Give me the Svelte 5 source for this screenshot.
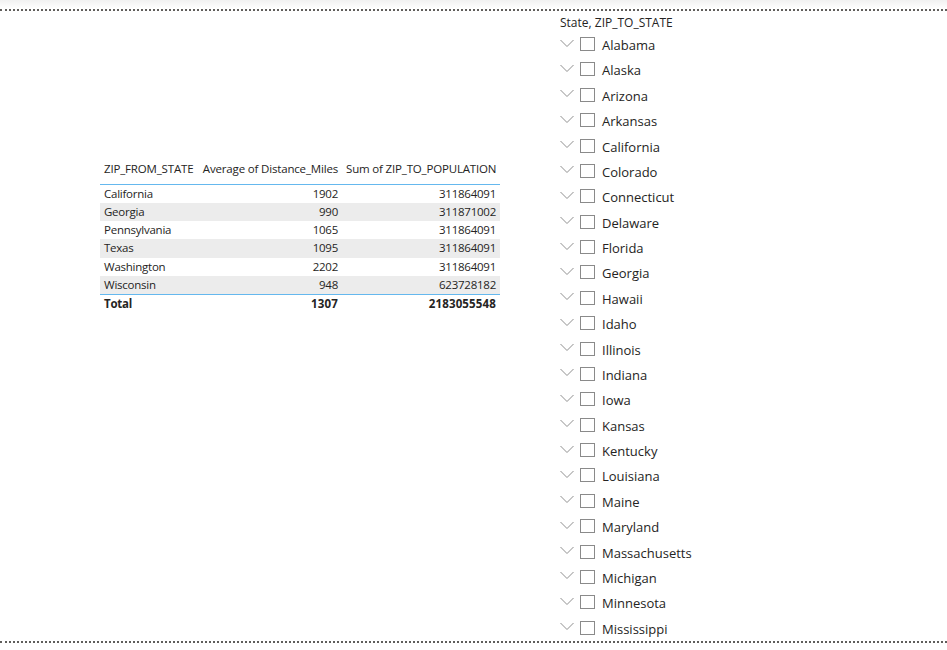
<script>
  const rows = [
    { state: "California", miles: 1902, pop: 311864091 },
    { state: "Georgia", miles: 990, pop: 311871002 },
    { state: "Pennsylvania", miles: 1065, pop: 311864091 },
    { state: "Texas", miles: 1095, pop: 311864091 },
    { state: "Washington", miles: 2202, pop: 311864091 },
    { state: "Wisconsin", miles: 948, pop: 623728182 }
  ];

  const states = [
    "Alabama", "Alaska", "Arizona", "Arkansas", "California", "Colorado",
    "Connecticut", "Delaware", "Florida", "Georgia", "Hawaii", "Idaho",
    "Illinois", "Indiana", "Iowa", "Kansas", "Kentucky", "Louisiana",
    "Maine", "Maryland", "Massachusetts", "Michigan", "Minnesota", "Mississippi"
  ];
</script>

<div class="page">
  <div class="canvas">
    <section class="table-wrap">
      <div class="table">
        <div class="row head">
          <span>ZIP_FROM_STATE</span>
          <span class="num">Average of Distance_Miles</span>
          <span class="num">Sum of ZIP_TO_POPULATION</span>
        </div>
        <div class="body">
          {#each rows as r, i}
            <div class="row" class:odd={i % 2 === 1}>
              <span>{r.state}</span>
              <span class="num">{r.miles}</span>
              <span class="num">{r.pop}</span>
            </div>
          {/each}
        </div>
        <div class="row total">
          <span>Total</span>
          <span class="num">1307</span>
          <span class="num">2183055548</span>
        </div>
      </div>
    </section>

    <section class="slicer">
      <div class="title">State, ZIP_TO_STATE</div>
      <ul>
        {#each states as s}
          <li>
            <svg class="chev" width="15" height="9" viewBox="0 0 15 9">
              <path d="M0.5 1 L7 7.5 L13.5 1" fill="none" stroke="#8f8f8f" stroke-width="1" />
            </svg>
            <span class="box"></span>
            <span class="name">{s}</span>
          </li>
        {/each}
      </ul>
    </section>
  </div>
</div>

<style>
  :global(body) {
    margin: 0;
    background: #fff;
  }
  .page {
    width: 947px;
    height: 650px;
    overflow: hidden;
    box-sizing: border-box;
    padding-top: 9px;
    background: linear-gradient(#f1f1f1, #fff 9px);
    font-family: "Open Sans", "Noto Sans", sans-serif;
    color: #252423;
  }
  .canvas {
    height: 634px;
    box-sizing: border-box;
    border-top: 2px dotted #605e5c;
    border-bottom: 2px dotted #605e5c;
    background: #fff;
    display: flex;
    overflow: hidden;
  }
  .table-wrap {
    flex: none;
    padding: 148px 60px 0 100px;
    width: 400px;
  }
  .table {
    font-size: 11.5px;
    letter-spacing: -0.24px;
  }
  .row {
    display: grid;
    grid-template-columns: 97px 145px 158px;
    height: 18.15px;
    line-height: 18.4px;
  }
  .row span {
    padding: 0 4px;
    white-space: nowrap;
  }
  .num {
    text-align: right;
  }
  .row.head {
    height: 25px;
    line-height: 20px;
    letter-spacing: -0.17px;
  }
  .body {
    border-top: 1px solid #65b8ee;
    border-bottom: 1px solid #65b8ee;
  }
  .odd {
    background: #ececec;
  }
  .row.total {
    font-weight: 700;
    line-height: 18px;
  }
  .row.total .num {
    letter-spacing: 0.15px;
  }
  .slicer {
    flex: none;
    margin-top: 2px;
  }
  .title {
    font-size: 12px;
    line-height: 19.4px;
  }
  ul {
    list-style: none;
    margin: 0;
    padding: 0;
  }
  li {
    display: flex;
    align-items: center;
    height: 25.39px;
    font-size: 13px;
  }
  .chev {
    flex: none;
    position: relative;
    top: -2px;
  }
  .box {
    flex: none;
    width: 13px;
    height: 12px;
    margin-left: 5px;
    border: 1px solid #8a8a8a;
    position: relative;
    top: -1px;
  }
  .name {
    margin-left: 7px;
    white-space: nowrap;
  }
</style>
